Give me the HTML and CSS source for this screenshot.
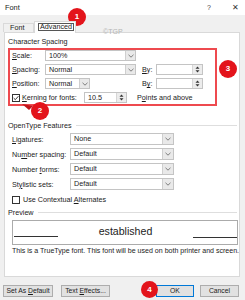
FILE: index.html
```html
<!DOCTYPE html>
<html>
<head>
<meta charset="utf-8">
<link rel="stylesheet" href="styles.css">
</head>
<body>
<div class="titlebar">
  <span class="title">Font</span>
  <span class="help">?</span>
  <span class="close">✕</span>
</div>
<div class="tabs">
  <div class="tab">Font</div>
  <div class="tab active"><span class="focus">Advanced</span></div>
</div>
<div class="panel">
  <div class="group-label">Character Spacing</div>
  <div class="spacing-box">
    <div class="row">
      <span class="lbl"><u>S</u>cale:</span>
      <span class="select w-scale"><span class="val">100%</span><span class="arrow"><svg width="6" height="4" viewBox="0 0 6 4"><polyline points="0.5,0.8 3,3.2 5.5,0.8" fill="none" stroke="#707070" stroke-width="0.9"/></svg></span></span>
    </div>
    <div class="row">
      <span class="lbl"><u>S</u>pacing:</span>
      <span class="select w-scale"><span class="val">Normal</span><span class="arrow"><svg width="6" height="4" viewBox="0 0 6 4"><polyline points="0.5,0.8 3,3.2 5.5,0.8" fill="none" stroke="#707070" stroke-width="0.9"/></svg></span></span>
      <span class="by by1"><u>B</u>y:</span>
      <span class="spin w-by"><span class="val"></span><span class="spinbtn"><svg width="5" height="7" viewBox="0 0 5 7"><polygon points="2.5,0.5 4.5,2.8 0.5,2.8" fill="#333"/><polygon points="0.5,4.2 4.5,4.2 2.5,6.5" fill="#333"/></svg></span></span>
    </div>
    <div class="row">
      <span class="lbl"><u>P</u>osition:</span>
      <span class="select w-pos"><span class="val">Normal</span><span class="arrow"><svg width="6" height="4" viewBox="0 0 6 4"><polyline points="0.5,0.8 3,3.2 5.5,0.8" fill="none" stroke="#707070" stroke-width="0.9"/></svg></span></span>
      <span class="by by2">B<u>y</u>:</span>
      <span class="spin w-by"><span class="val"></span><span class="spinbtn"><svg width="5" height="7" viewBox="0 0 5 7"><polygon points="2.5,0.5 4.5,2.8 0.5,2.8" fill="#333"/><polygon points="0.5,4.2 4.5,4.2 2.5,6.5" fill="#333"/></svg></span></span>
    </div>
    <div class="row">
      <span class="check checked"><svg width="6" height="6" viewBox="0 0 6 6"><polyline points="0.7,3.1 2.3,4.7 5.4,1.2" fill="none" stroke="#222" stroke-width="0.9"/></svg></span>
      <span class="kern-lbl"><u>K</u>erning for fonts:</span>
      <span class="spin w-kern"><span class="val">10.5</span><span class="spinbtn"><svg width="5" height="7" viewBox="0 0 5 7"><polygon points="2.5,0.5 4.5,2.8 0.5,2.8" fill="#333"/><polygon points="0.5,4.2 4.5,4.2 2.5,6.5" fill="#333"/></svg></span></span>
      <span class="points">P<u>o</u>ints and above</span>
    </div>
  </div>

  <div class="section sec-ot"><span>OpenType Features</span><span class="rule"></span></div>
  <div class="ot-rows">
    <div class="ot-row">
      <span class="ot-lbl"><u>L</u>igatures:</span>
      <span class="select w-ot"><span class="val">None</span><span class="arrow"><svg width="6" height="4" viewBox="0 0 6 4"><polyline points="0.5,0.8 3,3.2 5.5,0.8" fill="none" stroke="#707070" stroke-width="0.9"/></svg></span></span>
    </div>
    <div class="ot-row">
      <span class="ot-lbl">Nu<u>m</u>ber spacing:</span>
      <span class="select w-ot"><span class="val">Default</span><span class="arrow"><svg width="6" height="4" viewBox="0 0 6 4"><polyline points="0.5,0.8 3,3.2 5.5,0.8" fill="none" stroke="#707070" stroke-width="0.9"/></svg></span></span>
    </div>
    <div class="ot-row">
      <span class="ot-lbl">Number <u>f</u>orms:</span>
      <span class="select w-ot"><span class="val">Default</span><span class="arrow"><svg width="6" height="4" viewBox="0 0 6 4"><polyline points="0.5,0.8 3,3.2 5.5,0.8" fill="none" stroke="#707070" stroke-width="0.9"/></svg></span></span>
    </div>
    <div class="ot-row">
      <span class="ot-lbl">St<u>y</u>listic sets:</span>
      <span class="select w-ot"><span class="val">Default</span><span class="arrow"><svg width="6" height="4" viewBox="0 0 6 4"><polyline points="0.5,0.8 3,3.2 5.5,0.8" fill="none" stroke="#707070" stroke-width="0.9"/></svg></span></span>
    </div>
  </div>
  <div class="ctx-row">
    <span class="check"></span>
    <span>Use Contextual <u>A</u>lternates</span>
  </div>

  <div class="section sec-prev"><span>Preview</span><span class="rule"></span></div>
  <div class="preview">
    <span class="pline left"></span>
    <span class="sample">established</span>
    <span class="pline right"></span>
  </div>
  <div class="info">This is a TrueType font. This font will be used on both printer and screen.</div>
</div>
<div class="buttons">
  <span class="btn b-default">Set As <u>D</u>efault</span>
  <span class="btn b-effects">Text <u>E</u>ffects...</span>
  <span class="spacer"></span>
  <span class="btn b-ok">OK</span>
  <span class="btn b-cancel">Cancel</span>
</div>

<span class="watermark">©TGP</span>
<span class="badge badge1">1</span>
<span class="badge badge2">2</span>
<svg class="arrow2" width="12" height="6" viewBox="0 0 12 6"><polygon points="0,0 11,2 7,6" fill="#c0161c"/></svg>
<span class="badge badge3">3</span>
<span class="badge badge4">4</span>
</body>
</html>
```

FILE: styles.css
```css
* { box-sizing: border-box; margin: 0; padding: 0; }
html, body { width: 245px; height: 300px; overflow: hidden; }
body {
  position: relative;
  background: #f0f0f0;
  font-family: "Liberation Sans", Arial, sans-serif;
  font-size: 7.2px;
  line-height: 9px;
  color: #1b1b1b;
}
u { text-decoration: underline; text-underline-offset: 1px; text-decoration-thickness: 0.6px; }

.titlebar {
  height: 15px;
  background: #fff;
  display: flex;
  align-items: center;
  padding-left: 5px;
}
.title { flex: 1; font-size: 7.4px; }
.help { width: 25px; color: #444; font-size: 7px; }
.close { width: 13px; color: #333; font-size: 8px; }

.tabs {
  height: 17px;
  display: flex;
  align-items: flex-end;
  padding-left: 3px;
}
.tab {
  height: 9px;
  width: 31px;
  border: 1px solid #d9d9d9;
  border-bottom: none;
  padding-left: 6px;
  line-height: 8px;
  background: #f0f0f0;
}
.tab.active {
  position: relative;
  z-index: 1;
  height: 12px;
  width: 42px;
  margin-bottom: -1px;
  background: #fff;
  padding: 1px 0 0 3px;
}
.focus {
  display: inline-block;
  border: 1px solid #555;
  padding: 0 1px;
  line-height: 6px;
  height: 8px;
}

.panel {
  width: 236px;
  height: 245px;
  margin-left: 4px;
  background: #fff;
  border: 1px solid #d9d9d9;
  padding: 4px 0 0 3px;
}
.group-label { height: 9px; padding-left: 0; }

.spacing-box {
  margin-top: 2px;
  width: 209px;
  height: 58px;
  border: 2px solid #ee4a4f;
  padding: 0 0 0 2px;
  display: flex;
  flex-direction: column;
  gap: 3px;
}
.row { display: flex; align-items: center; height: 11px; }
.lbl { width: 33px; }

.select, .spin {
  display: flex;
  height: 11px;
  border: 1px solid #c4c4c4;
  background: #fff;
}
.select .val, .spin .val { flex: 1; padding-left: 3px; line-height: 9px; }
.arrow {
  width: 10px;
  border-left: 1px solid #cfcfcf;
  background: #e9e9e9;
  display: flex;
  align-items: center;
  justify-content: center;
}
.spinbtn {
  width: 10px;
  background: #ececec;
  border-left: 1px solid #d6d6d6;
  display: flex;
  align-items: center;
  justify-content: center;
}
.w-scale { width: 91px; }
.w-pos { width: 45px; }
.w-by { width: 47px; }
.w-kern { width: 43px; }
.by { width: 14px; }
.by1 { margin-left: 6px; }
.by2 { margin-left: 52px; }

.check {
  width: 8px;
  height: 8px;
  border: 1px solid #333;
  background: #fff;
  display: flex;
  align-items: center;
  justify-content: center;
}
.kern-lbl { width: 64px; padding-left: 2px; }
.points { margin-left: 10px; }

.section {
  display: flex;
  align-items: center;
  height: 9px;
  margin-right: 2px;
}
.sec-ot { margin-top: 15px; }
.sec-prev { margin-top: 4px; }
.rule { flex: 1; height: 1px; background: #dedede; margin-left: 4px; }

.ot-rows {
  margin-top: 3px;
  padding-left: 4px;
  display: flex;
  flex-direction: column;
  gap: 3px;
}
.ot-row { display: flex; align-items: center; height: 12px; }
.ot-lbl { width: 58px; }
.w-ot { width: 104px; height: 12px; }
.w-ot .val { line-height: 10px; }
.w-ot .arrow { width: 11px; }

.ctx-row {
  margin-top: 5px;
  padding-left: 4px;
  height: 9px;
  display: flex;
  align-items: center;
  gap: 3px;
}

.preview {
  margin: 3px 0 0 4px;
  width: 226px;
  height: 25px;
  border: 1px solid #ababab;
  display: flex;
  align-items: flex-end;
  padding: 0 0 6px 1px;
}
.pline { height: 1px; background: #333; width: 44px; }
.pline.left { margin-bottom: 1px; }
.sample {
  flex: 1;
  text-align: center;
  font-size: 10.6px;
  line-height: 12px;
  color: #222;
  margin-bottom: 1px;
}
.info {
  margin-top: 1px;
  font-size: 7.05px;
  line-height: 9px;
  padding-left: 4px;
  white-space: nowrap;
}

.buttons {
  margin-top: 8px;
  height: 12px;
  display: flex;
  padding: 0 6px 0 3px;
}
.btn {
  height: 12px;
  border: 1px solid #adadad;
  background: #e1e1e1;
  text-align: center;
  line-height: 10px;
  font-size: 6.8px;
}
.b-default { width: 50px; }
.b-effects { width: 49px; margin-left: 8px; }
.spacer { flex: 1; }
.b-ok { width: 38px; border-color: #0078d7; }
.b-cancel { width: 39px; margin-left: 6px; }

.watermark {
  position: absolute;
  left: 103px;
  top: 28px;
  color: #b5b5b5;
  font-size: 7px;
  line-height: 8px;
}
.badge {
  position: absolute;
  width: 18px;
  height: 18px;
  border-radius: 50%;
  background: #e3141b;
  color: #fff;
  font-weight: bold;
  font-size: 8px;
  line-height: 18px;
  text-align: center;
}
.badge1 { left: 68px; top: 8px; }
.badge2 { left: 31px; top: 102px; }
.badge3 { left: 219px; top: 60px; }
.badge4 { left: 141px; top: 281px; width: 17px; height: 17px; line-height: 17px; }
.arrow2 { position: absolute; left: 22px; top: 104px; }
```
